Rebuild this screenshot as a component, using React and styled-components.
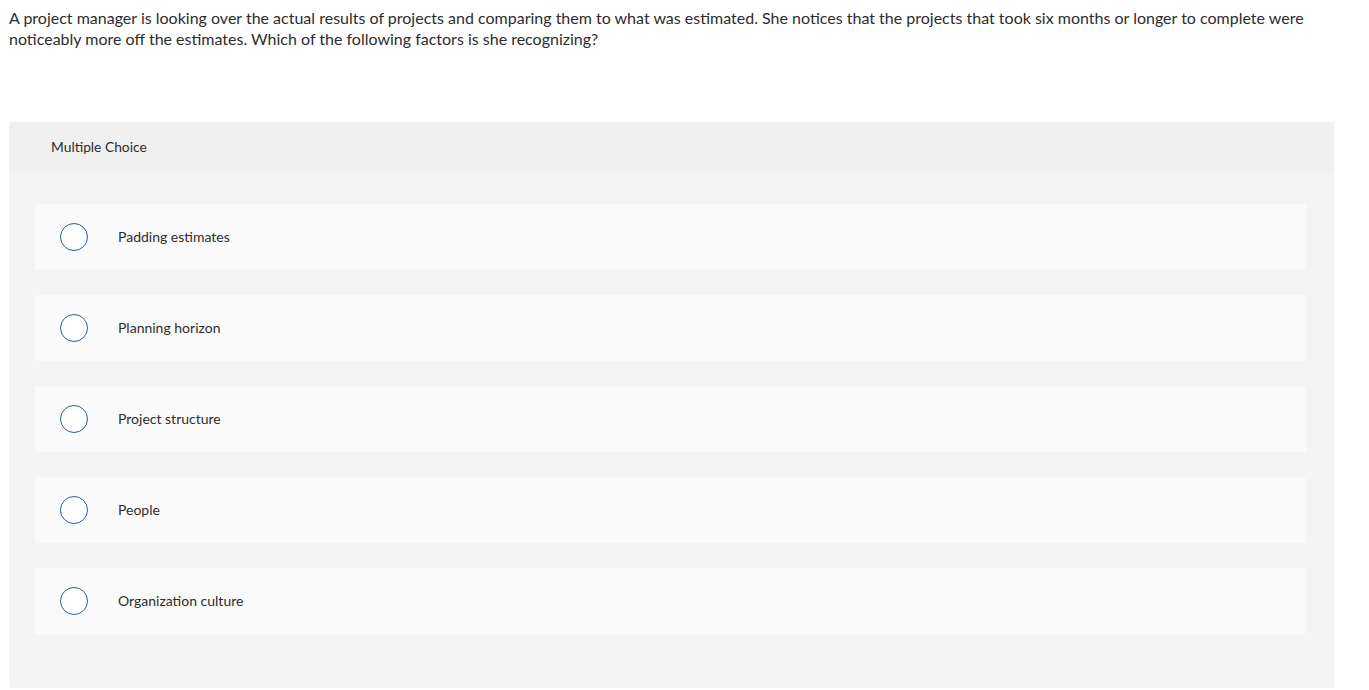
import React from "react";
import styled, { createGlobalStyle } from "styled-components";

const Global = createGlobalStyle`
  html, body { margin: 0; padding: 0; background: #fff; }
  body { font-family: Lato, "Open Sans", "Liberation Sans", sans-serif; color: #2d2d2d; }
`;

const Page = styled.div`
  padding: 7px 35px 0 9px;
`;

const Question = styled.p`
  margin: 0;
  font-size: 16px;
  line-height: 21px;
  color: #2d2d2d;
  max-width: 1310px;
`;

const Panel = styled.section`
  margin-top: 73px;
  background: #f4f4f4;
  border-radius: 3px;
  padding-bottom: 54px;
  width: 1325px;
`;

const PanelHeader = styled.div`
  height: 49px;
  background: #f0f0f0;
  border-radius: 3px 3px 0 0;
  display: flex;
  align-items: center;
  padding-left: 42px;
  font-size: 13.8px;
  color: #2d2d2d;
`;

const Options = styled.div`
  display: flex;
  flex-direction: column;
  gap: 25px;
  padding: 33px 28px 0 26px;
`;

const Option = styled.label`
  display: flex;
  align-items: center;
  height: 66px;
  background: #fafafa;
  border-radius: 3px;
  padding-left: 25px;
  padding-bottom: 1px;
  box-sizing: border-box;
  font-size: 14px;
  color: #2d2d2d;
  cursor: pointer;
`;

const Radio = styled.span`
  width: 26px;
  height: 26px;
  border-radius: 50%;
  border: 1px solid #2e5f94;
  background: #fff;
  flex-shrink: 0;
  margin-right: 30px;
`;

const choices = [
  "Padding estimates",
  "Planning horizon",
  "Project structure",
  "People",
  "Organization culture",
];

export default function App() {
  return (
    <>
      <Global />
      <Page>
        <Question>
          A project manager is looking over the actual results of projects and comparing them to what was estimated. She notices that the projects that took six months or longer to complete were noticeably more off the estimates. Which of the following factors is she recognizing?
        </Question>
        <Panel>
          <PanelHeader>Multiple Choice</PanelHeader>
          <Options>
            {choices.map((c) => (
              <Option key={c}>
                <Radio />
                {c}
              </Option>
            ))}
          </Options>
        </Panel>
      </Page>
    </>
  );
}
